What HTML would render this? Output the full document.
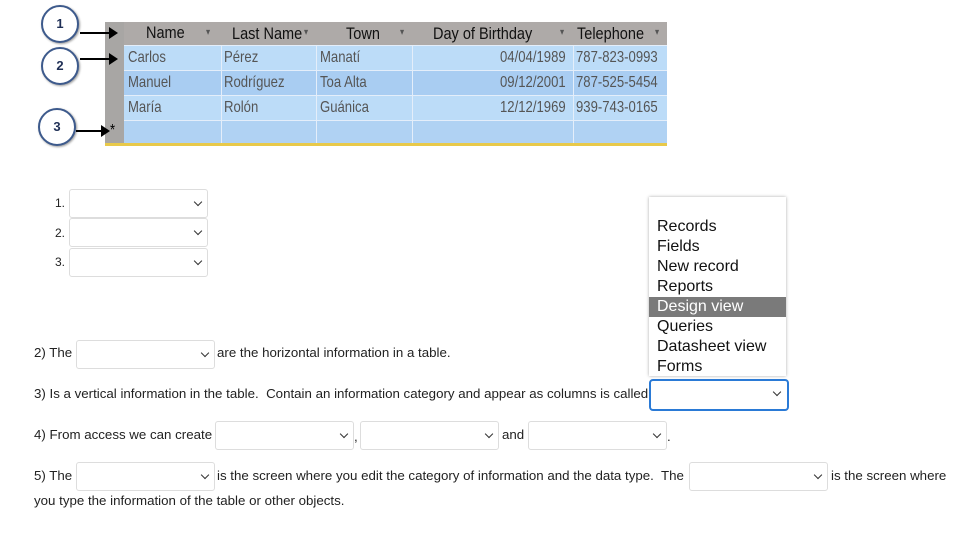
<!DOCTYPE html>
<html><head><meta charset="utf-8"><style>
body{margin:0;width:975px;height:538px;background:#fff;font-family:"Liberation Sans",Arial,sans-serif;position:relative;overflow:hidden}
.a{position:absolute}
.circ{position:absolute;width:34px;height:34px;border:2px solid #3d5a8c;border-radius:50%;background:#fff;text-align:center;line-height:34px;font-weight:bold;font-size:13px;color:#1f2f56;box-shadow:1px 1px 2px #999}
.arr{position:absolute;height:2px;background:#000}
.arr:after{content:"";position:absolute;right:-2px;top:-5px;border-left:9px solid #000;border-top:6px solid transparent;border-bottom:6px solid transparent}
.cell{position:absolute;font-size:16px;color:#555;transform:scaleX(0.82);transform-origin:left top;white-space:nowrap}
.h{font-size:16.5px;color:#111;transform:scaleX(0.88)}
.sel{position:absolute;border:1px solid #ddd;border-radius:3px;background:#fff;height:27px}
.sel:after{content:"";position:absolute;right:6px;top:9px;width:5px;height:5px;border-right:1.3px solid #333;border-bottom:1.3px solid #333;transform:rotate(45deg)}
.t{position:absolute;font-size:13.3px;color:#222;white-space:nowrap}
.li{font-size:16px;color:#111;height:20px;line-height:20px;padding-left:8px}
</style></head><body>
<div class="a" style="left:105px;top:22px;width:562px;height:121px;background:#bcdcf8;border-bottom:3px solid #e8c94a"></div>
<div class="a" style="left:105px;top:22px;width:562px;height:23px;background:#aeaaa8"></div>
<div class="a" style="left:105px;top:22px;width:19px;height:121px;background:#a8a6a4"></div>
<div class="a" style="left:124px;top:70px;width:543px;height:25px;background:#a9cdf2"></div>
<div class="a" style="left:124px;top:120px;width:543px;height:23px;background:#b0d2f3"></div>
<div class="a" style="left:124px;top:45px;width:543px;height:1px;background:#e4eefa"></div>
<div class="a" style="left:124px;top:70px;width:543px;height:1px;background:#e4eefa"></div>
<div class="a" style="left:124px;top:95px;width:543px;height:1px;background:#e4eefa"></div>
<div class="a" style="left:124px;top:120px;width:543px;height:1px;background:#e4eefa"></div>
<div class="a" style="left:221px;top:45px;width:1px;height:98px;background:#e4eefa"></div>
<div class="a" style="left:316px;top:45px;width:1px;height:98px;background:#e4eefa"></div>
<div class="a" style="left:412px;top:45px;width:1px;height:98px;background:#e4eefa"></div>
<div class="a" style="left:573px;top:45px;width:1px;height:98px;background:#e4eefa"></div>
<div class="cell h" style="left:146px;top:24px">Name</div>
<div class="cell h" style="left:232px;top:25px">Last Name</div>
<div class="cell h" style="left:346px;top:25px">Town</div>
<div class="cell h" style="left:433px;top:25px">Day of Birthday</div>
<div class="cell h" style="left:577px;top:25px">Telephone</div>
<div class="cell" style="left:206px;top:27px;font-size:10px">▾</div>
<div class="cell" style="left:304px;top:27px;font-size:10px">▾</div>
<div class="cell" style="left:400px;top:27px;font-size:10px">▾</div>
<div class="cell" style="left:560px;top:27px;font-size:10px">▾</div>
<div class="cell" style="left:655px;top:27px;font-size:10px">▾</div>
<div class="cell" style="left:128px;top:49px">Carlos</div><div class="cell" style="left:224px;top:49px">Pérez</div><div class="cell" style="left:320px;top:49px">Manatí</div><div class="cell" style="left:500px;top:49px">04/04/1989</div><div class="cell" style="left:576px;top:49px">787-823-0993</div>
<div class="cell" style="left:128px;top:74px">Manuel</div><div class="cell" style="left:224px;top:74px">Rodríguez</div><div class="cell" style="left:320px;top:74px">Toa Alta</div><div class="cell" style="left:500px;top:74px">09/12/2001</div><div class="cell" style="left:576px;top:74px">787-525-5454</div>
<div class="cell" style="left:128px;top:99px">María</div><div class="cell" style="left:224px;top:99px">Rolón</div><div class="cell" style="left:320px;top:99px">Guánica</div><div class="cell" style="left:500px;top:99px">12/12/1969</div><div class="cell" style="left:576px;top:99px">939-743-0165</div>
<div class="cell" style="left:110px;top:122px;color:#000;font-size:16px">*</div>
<div class="circ" style="left:41px;top:5px">1</div>
<div class="circ" style="left:41px;top:47px">2</div>
<div class="circ" style="left:38px;top:108px">3</div>
<div class="arr" style="left:80px;top:32px;width:36px"></div>
<div class="arr" style="left:80px;top:58px;width:36px"></div>
<div class="arr" style="left:76px;top:130px;width:32px"></div>
<div class="t" style="left:55px;top:196px;font-size:12px">1.</div>
<div class="t" style="left:55px;top:226px;font-size:12px">2.</div>
<div class="t" style="left:55px;top:255px;font-size:12px">3.</div>
<div class="sel" style="left:69px;top:189px;width:137px"></div>
<div class="sel" style="left:69px;top:218px;width:137px"></div>
<div class="sel" style="left:69px;top:248px;width:137px"></div>
<div class="a" style="left:649px;top:197px;width:137px;height:179px;background:#fff;box-shadow:0 0 3px #aaa;padding-top:20px;box-sizing:border-box">
<div class="li">Records</div><div class="li">Fields</div><div class="li">New record</div><div class="li">Reports</div>
<div class="li" style="background:#7a7a7a;color:#fff">Design view</div>
<div class="li">Queries</div><div class="li">Datasheet view</div><div class="li">Forms</div></div>
<div class="a" style="left:649px;top:379px;width:136px;height:28px;border:2px solid #2a7ad6;border-radius:4px"></div>
<div class="a" style="left:774px;top:389px;width:5px;height:5px;border-right:1.3px solid #333;border-bottom:1.3px solid #333;transform:rotate(45deg)"></div>
<div class="t" style="left:34px;top:345px">2) The</div>
<div class="sel" style="left:76px;top:340px;width:137px"></div>
<div class="t" style="left:217px;top:345px">are the horizontal information in a table.</div>
<div class="t" style="left:34px;top:386px">3) Is a vertical information in the table.&nbsp; Contain an information category and appear as columns is called</div>
<div class="t" style="left:34px;top:427px">4) From access we can create</div>
<div class="sel" style="left:215px;top:421px;width:137px"></div>
<div class="t" style="left:354px;top:429px">,</div>
<div class="sel" style="left:360px;top:421px;width:137px"></div>
<div class="t" style="left:502px;top:427px">and</div>
<div class="sel" style="left:528px;top:421px;width:137px"></div>
<div class="t" style="left:667px;top:429px">.</div>
<div class="t" style="left:34px;top:468px">5) The</div>
<div class="sel" style="left:76px;top:462px;width:137px"></div>
<div class="t" style="left:217px;top:468px">is the screen where you edit the category of information and the data type.&nbsp; The</div>
<div class="sel" style="left:689px;top:462px;width:137px"></div>
<div class="t" style="left:831px;top:468px">is the screen where</div>
<div class="t" style="left:34px;top:493px">you type the information of the table or other objects.</div>
</body></html>
